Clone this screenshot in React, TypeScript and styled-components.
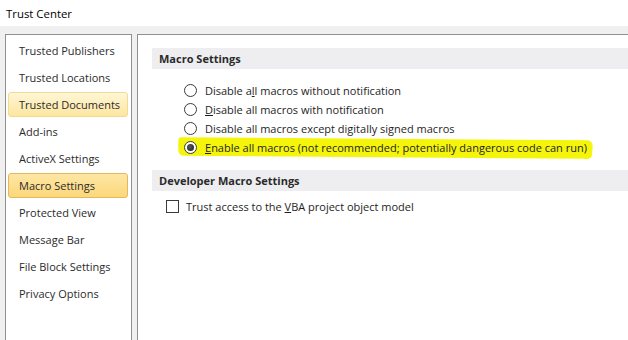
import styled, { createGlobalStyle } from "styled-components";

const GlobalStyle = createGlobalStyle`
  *, *::before, *::after { box-sizing: border-box; }
  html, body { margin: 0; padding: 0; background: #f0f0f0; }
  body {
    font-family: "Open Sans", "Noto Sans", sans-serif;
    font-size: 11px;
    color: #1e1e1e;
  }
`;

const menuItems = [
	"Trusted Publishers",
	"Trusted Locations",
	"Trusted Documents",
	"Add-ins",
	"ActiveX Settings",
	"Macro Settings",
	"Protected View",
	"Message Bar",
	"File Block Settings",
	"Privacy Options",
];

const App = () => {
	return (
		<>
			<GlobalStyle />
			<Window>
				<TitleBar>Trust Center</TitleBar>
				<Body>
					<Sidebar>
						{menuItems.map((label) => (
							<MenuItem
								key={label}
								$state={
									label === "Macro Settings"
										? "selected"
										: label === "Trusted Documents"
										? "hover"
										: "none"
								}
							>
								{label}
							</MenuItem>
						))}
					</Sidebar>
					<Content>
						<SectionHeader>Macro Settings</SectionHeader>
						<OptionList>
							<OptionRow>
								<Radio />
								<span>
									Disable a<u>l</u>l macros without notification
								</span>
							</OptionRow>
							<OptionRow>
								<Radio />
								<span>
									<u>D</u>isable all macros with notification
								</span>
							</OptionRow>
							<OptionRow>
								<Radio />
								<span>
									Disable all macros except di<u>g</u>itally signed macros
								</span>
							</OptionRow>
							<OptionRow>
								<Highlight viewBox="0 0 416 24" preserveAspectRatio="none">
									<path
										d="M3 2 L410 5 Q414 6 414 11 L413 20 Q412 23 406 22 L5 19 Q1 18 1 13 L1 6 Q1 2 3 2 Z"
										fill="#f5f50c"
										stroke="#f5f50c"
										strokeWidth="1.5"
										strokeLinejoin="round"
									/>
								</Highlight>
								<Radio $checked />
								<OptionText>
									<u>E</u>nable all macros (not recommended; potentially dangerous
									code can run)
								</OptionText>
							</OptionRow>
						</OptionList>
						<SectionHeader $spaced>Developer Macro Settings</SectionHeader>
						<CheckRow>
							<Checkbox />
							<span>
								Trust access to the <u>V</u>BA project object model
							</span>
						</CheckRow>
					</Content>
				</Body>
			</Window>
		</>
	);
};

const Window = styled.div`
	width: 628px;
	height: 340px;
	display: flex;
	flex-direction: column;
	overflow: hidden;
`;

const TitleBar = styled.div`
	height: 26px;
	flex-shrink: 0;
	background: #ffffff;
	padding-left: 6px;
	display: flex;
	align-items: center;
	font-size: 11.4px;
	color: #000;
`;

const Body = styled.div`
	flex: 1;
	display: flex;
	gap: 5px;
	padding: 8px 0 0 5px;
	background: #f0f0f0;
	min-height: 0;
`;

const Sidebar = styled.nav`
	width: 127px;
	flex-shrink: 0;
	background: #ffffff;
	border: 1px solid #8f9091;
	border-bottom: none;
	padding: 3px 3px 0 2px;
	display: flex;
	flex-direction: column;
	gap: 2px;
`;

const MenuItem = styled.div<{ $state: "none" | "hover" | "selected" }>`
	height: 25px;
	display: flex;
	align-items: center;
	padding-left: 10px;
	border-radius: 3px;
	color: #2b2b2b;
	white-space: nowrap;
	border: 1px solid
		${(p) =>
			p.$state === "selected"
				? "#e2b85a"
				: p.$state === "hover"
				? "#f3da93"
				: "transparent"};
	background: ${(p) =>
		p.$state === "selected"
			? "linear-gradient(#fde7a5, #fcd77b)"
			: p.$state === "hover"
			? "linear-gradient(#fff6d6, #fde69f)"
			: "transparent"};
`;

const Content = styled.main`
	flex: 1;
	background: #ffffff;
	border-left: 1px solid #8f9091;
	border-top: 1px solid #8f9091;
	padding: 13px 0 0 14px;
`;

const SectionHeader = styled.div<{ $spaced?: boolean }>`
	height: 21px;
	margin-top: ${(p) => (p.$spaced ? "13px" : "0")};
	background: #eeeef1;
	padding-left: 7px;
	display: flex;
	align-items: center;
	font-weight: 700;
	color: #2a2a2a;
`;

const OptionList = styled.div`
	margin-top: 12px;
	padding-left: 32px;
	display: flex;
	flex-direction: column;
`;

const OptionRow = styled.div`
	position: relative;
	height: 19px;
	display: flex;
	align-items: center;
	gap: 8px;
	white-space: nowrap;
`;

const OptionText = styled.span`
	position: relative;
`;

const Highlight = styled.svg`
	position: absolute;
	left: -6px;
	top: -2px;
	width: 416px;
	height: 24px;
`;

const Radio = styled.span<{ $checked?: boolean }>`
	position: relative;
	width: 13px;
	height: 13px;
	flex-shrink: 0;
	border-radius: 50%;
	border: 1px solid #3a3a3a;
	background: #ffffff;

	&::after {
		content: "";
		display: ${(p) => (p.$checked ? "block" : "none")};
		position: absolute;
		left: 2px;
		top: 2px;
		width: 7px;
		height: 7px;
		border-radius: 50%;
		background: radial-gradient(circle at 40% 40%, #5a5a5a, #1a1a1a);
	}
`;

const CheckRow = styled.div`
	height: 19px;
	margin-top: 6px;
	padding-left: 14px;
	display: flex;
	align-items: center;
	gap: 7px;
	white-space: nowrap;
`;

const Checkbox = styled.span`
	width: 13px;
	height: 13px;
	flex-shrink: 0;
	border: 1px solid #3a3a3a;
	background: #ffffff;
`;

export default App;
